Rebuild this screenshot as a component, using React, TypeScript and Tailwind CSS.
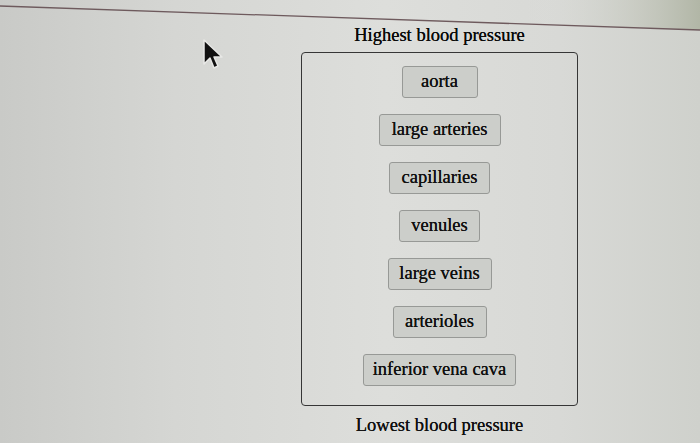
import React from "react";

const organs = [
  { label: "aorta", w: "w-[76px]" },
  { label: "large arteries", w: "w-[122px]" },
  { label: "capillaries", w: "w-[101px]" },
  { label: "venules", w: "w-[81px]" },
  { label: "large veins", w: "w-[104px]" },
  { label: "arterioles", w: "w-[94px]" },
  { label: "inferior vena cava", w: "w-[153px]" },
];

function Pointer() {
  return (
    <svg
      className="absolute left-[201px] top-[38px]"
      width="26"
      height="36"
      viewBox="0 0 26 36"
    >
      <path
        d="M3 2 L3 26 L9 20 L13 30 L17 28 L13 19 L21 19 Z"
        fill="#111"
        stroke="#e8e8e6"
        strokeWidth="1.5"
        strokeLinejoin="round"
      />
    </svg>
  );
}

export default function App() {
  return (
    <div
      className="relative w-[700px] h-[443px] overflow-hidden bg-[linear-gradient(90deg,#c9cac7_0%,#d5d6d3_25%,#dddedb_55%,#d8d9d6_80%,#cfd1cc_100%)] [text-shadow:0_0_0.6px_#000]"
      style={{ fontFamily: '"Liberation Serif", "Times New Roman", serif' }}
    >
      {/* screen edge across the top */}
      <svg className="absolute left-0 top-0" width="700" height="40">
        <defs>
          <linearGradient id="corner" x1="0" y1="0" x2="1" y2="0">
            <stop offset="0.75" stopColor="#e4e4e2" stopOpacity="0" />
            <stop offset="1" stopColor="#aeb3a2" stopOpacity="0.9" />
          </linearGradient>
        </defs>
        <polygon points="0,0 700,0 700,30 0,6" fill="url(#corner)" />
        <line x1="0" y1="6" x2="700" y2="30" stroke="#6e5a5d" strokeWidth="1.3" />
      </svg>

      <Pointer />

      <div className="flex flex-col items-center w-[277px] ml-[301px] pt-[24px]">
        <div className="text-[18.5px] leading-[22px] text-[#0a0a0a] h-[28px]">
          Highest blood pressure
        </div>
        <div className="w-full flex flex-col items-center gap-[16px] border-[1.5px] border-[#363636] rounded-[4px] pt-[13px] pb-[19px]">
          {organs.map((o) => (
            <div
              key={o.label}
              className={`${o.w} h-[32px] flex items-center justify-center rounded-[3px] border border-[#979996] bg-[#ccceca] text-[18.5px] text-[#111]`}
            >
              {o.label}
            </div>
          ))}
        </div>
        <div className="mt-[8px] text-[18.5px] leading-[22px] text-[#111]">
          Lowest blood pressure
        </div>
      </div>
    </div>
  );
}
